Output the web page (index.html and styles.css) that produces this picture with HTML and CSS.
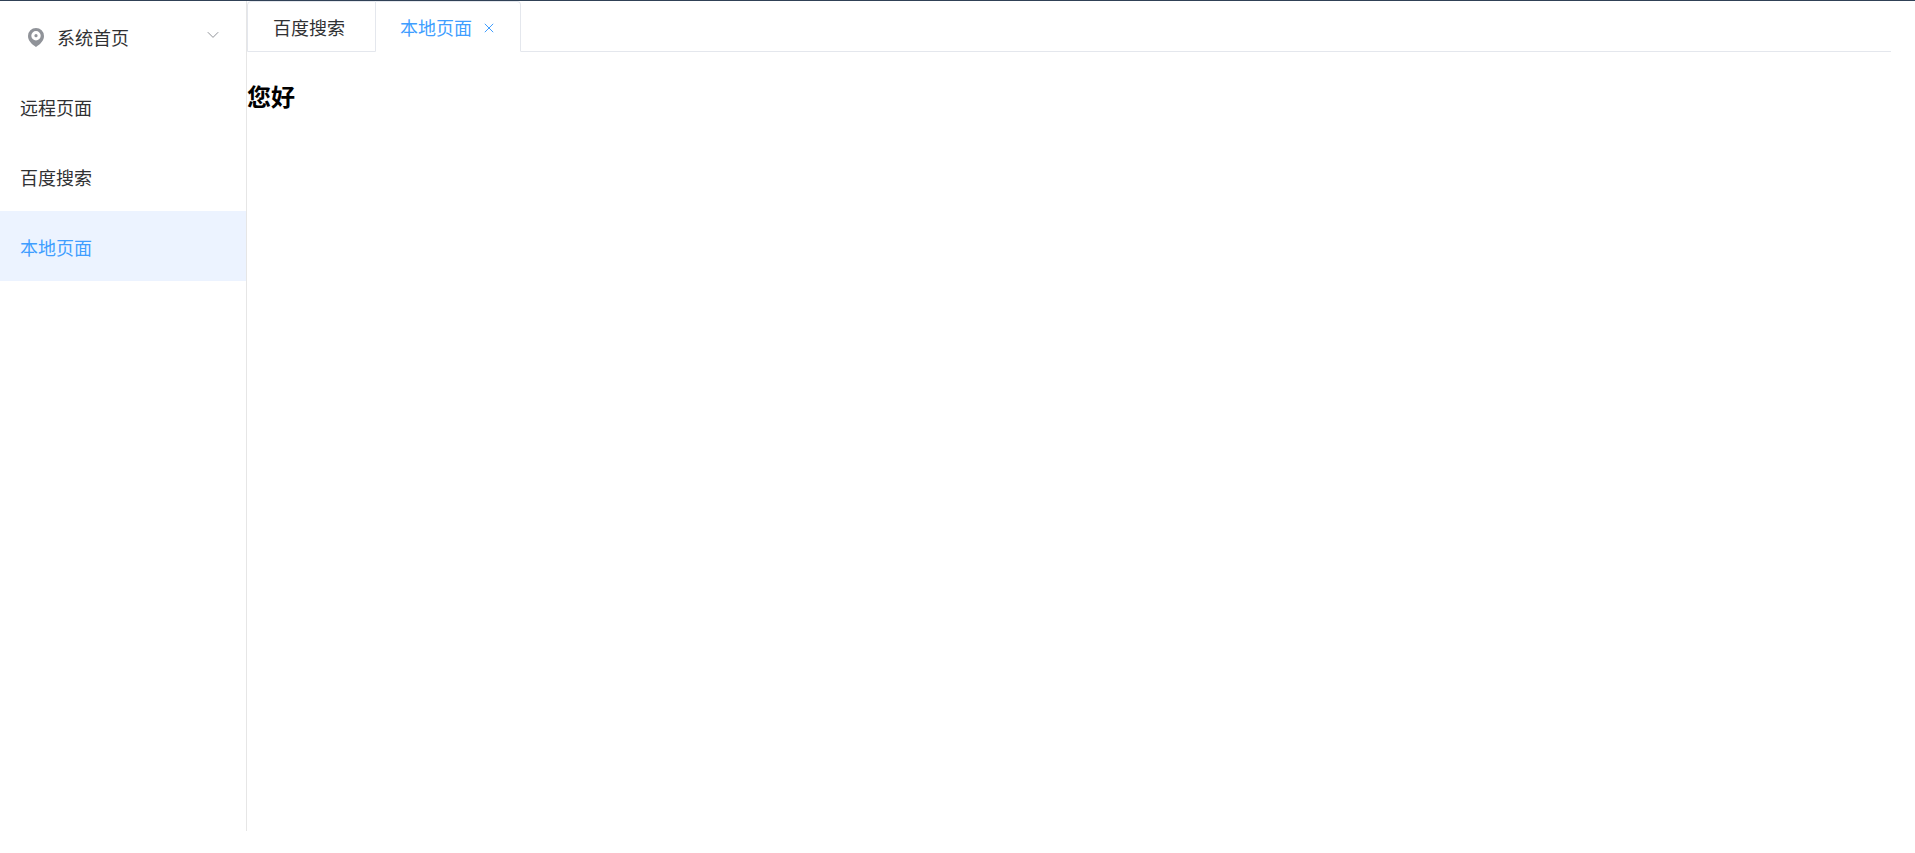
FILE: index.html
```html
<!DOCTYPE html>
<html lang="zh-CN">
<head>
<meta charset="utf-8">
<title>系统首页</title>
<link rel="stylesheet" href="styles.css">
</head>
<body>
<div class="layout">
  <nav class="sidebar" aria-label="系统首页">
    <button class="menu-title" type="button" aria-expanded="true">
      <svg class="icon-pin" viewBox="0 0 16 19" aria-hidden="true"><path fill-rule="evenodd" d="M8 0a8 8 0 0 1 8 8c0 4.600-3.500 8-8 11C3.500 16 0 12.600 0 8a8 8 0 0 1 8-8zm0 3a4.700 4.700 0 1 0 0 9.400A4.700 4.700 0 0 0 8 3z"/><circle cx="8" cy="7.700" r="1.600"/></svg>
      <span class="label">系统首页</span>
      <svg class="icon-arrow" viewBox="0 0 12 8" aria-hidden="true"><path d="M.8 1.200 6 6.400l5.200-5.200"/></svg>
    </button>
    <a class="menu-item" href="#remote">远程页面</a>
    <a class="menu-item" href="#baidu">百度搜索</a>
    <a class="menu-item active" href="#local" aria-current="page">本地页面</a>
  </nav>
  <main class="main">
    <div class="tabs">
      <div class="tab"><button class="tab-name" type="button">百度搜索</button></div>
      <div class="tab active">
        <button class="tab-name" type="button">本地页面</button>
        <button class="tab-close" type="button" aria-label="关闭"><svg viewBox="0 0 10 10" aria-hidden="true"><path d="m.8.8 8.400 8.400m0-8.400L.8 9.200"/></svg></button>
      </div>
      <div class="tabs-rest"></div>
    </div>
    <h1 class="heading">您好</h1>
  </main>
</div>
</body>
</html>
```
FILE: styles.css
```css
* {
  box-sizing: border-box;
}

body {
  margin: 0;
  background: #fff;
  color: #303133;
  font-family: "Noto Sans CJK SC", sans-serif;
  font-size: 18px;
  font-weight: 400;
}

button {
  padding: 0;
  border: 0;
  background: none;
  color: inherit;
  font: inherit;
  cursor: pointer;
}

.layout {
  display: flex;
  height: calc(100vh - 22px);
  border-top: 1px solid #304156;
}

.sidebar {
  display: flex;
  flex-direction: column;
  flex: 0 0 247px;
  border-right: 1px solid #e6e6e6;
}

.menu-title,
.menu-item {
  display: flex;
  align-items: center;
  height: 70px;
  padding: 2px 20px 0;
  color: #303133;
  text-decoration: none;
}

.menu-title {
  padding: 2px 27px 0 28px;
}

.menu-title .label {
  margin-left: 13px;
}

.menu-item.active {
  background: #ecf3ff;
  color: #409eff;
}

.icon-pin {
  width: 16px;
  height: 19px;
  fill: #909399;
}

.icon-arrow {
  width: 12px;
  height: 8px;
  margin: 0 0 4px auto;
  fill: none;
  stroke: #909399;
}

.main {
  flex: 1;
  padding-right: 24px;
}

.tabs {
  display: flex;
  height: 51px;
}

.tab {
  display: flex;
  align-items: center;
  padding: 0 30px 0 25px;
  border: 1px solid #e4e7ed;
  border-top-left-radius: 4px;
}

.tab.active {
  gap: 12px;
  padding: 0 26px 0 24px;
  border-bottom-color: transparent;
  border-left: 0;
  border-radius: 0 4px 0 0;
  color: #409eff;
}

.tab-close {
  display: flex;
  padding-top: 2px;
}

.tab-close svg {
  width: 10px;
  height: 10px;
  fill: none;
  stroke: #409eff;
}

.tabs-rest {
  flex: 1;
  border-bottom: 1px solid #e4e7ed;
}

.heading {
  margin: 26px 0 0;
  color: #000;
  font-size: 24px;
  font-weight: 700;
  line-height: 36px;
}
```
